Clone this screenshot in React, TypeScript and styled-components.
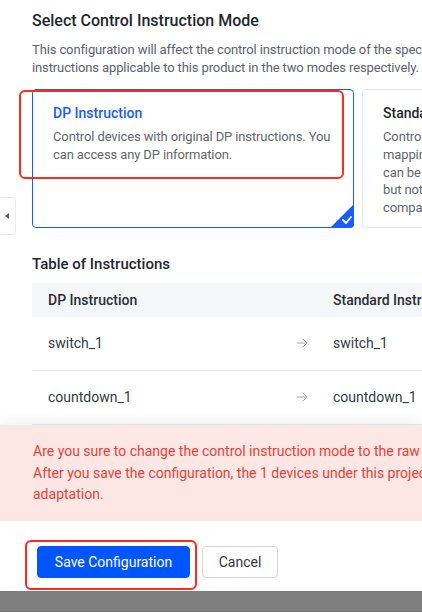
import styled, { createGlobalStyle } from "styled-components";

const Global = createGlobalStyle`
  html, body {
    margin: 0;
    padding: 0;
    background: #ffffff;
  }
  body {
    font-family: Roboto, "Liberation Sans", sans-serif;
    -webkit-font-smoothing: antialiased;
  }
`;

const Page = styled.div`
  position: relative;
  width: 422px;
  height: 612px;
  overflow: hidden;
  display: flex;
  flex-direction: column;
  background: #fff;
`;

const Scroll = styled.div`
  flex: 0 0 425px;
  overflow: hidden;
  padding: 9px 0 0 32px;
  box-sizing: border-box;
`;

const Title = styled.div`
  font-size: 16px;
  line-height: 24px;
  font-weight: 500;
  color: #23272e;
  white-space: nowrap;
`;

const Desc = styled.div`
  margin-top: 8px;
  font-size: 13px;
  line-height: 18px;
  letter-spacing: -0.12px;
  color: #5b6270;
`;

const Line = styled.span`
  display: block;
  white-space: nowrap;
`;

const CardRow = styled.div`
  margin-top: 12px;
  display: flex;
  gap: 8px;
  align-items: stretch;
`;

const Card = styled.div<{ $active?: boolean }>`
  position: relative;
  flex: 0 0 322px;
  box-sizing: border-box;
  padding: 13px 20px 10px;
  border: 1px solid ${(p) => (p.$active ? "#1a5cff" : "#e6e8eb")};
  border-radius: 4px;
`;

const CardTitle = styled.div<{ $active?: boolean }>`
  font-size: 14px;
  line-height: 20px;
  font-weight: 500;
  color: ${(p) => (p.$active ? "#1a5cff" : "#23272e")};
  white-space: nowrap;
`;

const CardText = styled.div`
  margin-top: 5px;
  font-size: 13px;
  line-height: 17.8px;
  letter-spacing: -0.12px;
  color: #62666d;
`;

const CheckCorner = styled.svg`
  position: absolute;
  right: -1px;
  bottom: -1px;
  width: 24px;
  height: 24px;
  border-bottom-right-radius: 4px;
`;

const Mark = styled.div<{ $top: number; $left: number; $w: number; $h: number }>`
  position: absolute;
  top: ${(p) => p.$top}px;
  left: ${(p) => p.$left}px;
  width: ${(p) => p.$w}px;
  height: ${(p) => p.$h}px;
  box-sizing: border-box;
  border: 2.5px solid #ff2b1f;
  border-radius: 6px;
  pointer-events: none;
`;

const CollapseTab = styled.div`
  position: absolute;
  left: -4px;
  top: 197px;
  width: 20px;
  height: 38px;
  box-sizing: border-box;
  background: #fff;
  border: 1px solid #e9ebee;
  border-radius: 0 4px 4px 0;
  display: flex;
  align-items: center;
  padding-left: 8px;
  z-index: 2;
`;

const TabArrow = styled.div`
  width: 0;
  height: 0;
  border-top: 3px solid transparent;
  border-bottom: 3px solid transparent;
  border-right: 4px solid #555b66;
`;

const SectionTitle = styled.div`
  margin-top: 25px;
  font-size: 15px;
  line-height: 22px;
  font-weight: 500;
  color: #23272e;
`;

const Table = styled.div`
  margin-top: 8px;
  width: 700px;
`;

const Row = styled.div<{ $head?: boolean }>`
  display: grid;
  grid-template-columns: 255px 30px 1fr;
  align-items: center;
  height: ${(p) => (p.$head ? "34px" : "53px")};
  background: ${(p) => (p.$head ? "#f5f6f8" : "#fff")};
  border-bottom: ${(p) => (p.$head ? "none" : "1px solid #e8eaed")};
  font-size: 14px;
  color: ${(p) => (p.$head ? "#2b2f36" : "#353a42")};
  font-weight: ${(p) => (p.$head ? 500 : 400)};
`;

const Cell = styled.div`
  padding-left: 16px;
  white-space: nowrap;
`;

const ArrowCell = styled.div`
  display: flex;
  justify-content: center;
  color: #a3a8b0;
`;

const Footer = styled.div`
  position: relative;
  flex: 0 0 auto;
  background: #fff;
  box-shadow: 0 -5px 10px rgba(0, 0, 0, 0.05);
`;

const Warning = styled.div`
  height: 96px;
  box-sizing: border-box;
  padding: 16px 0 0 33px;
  background: #fde7e4;
  color: #e5423a;
  font-size: 14px;
  line-height: 21.5px;
`;

const Actions = styled.div`
  height: 70px;
  box-sizing: border-box;
  padding: 25px 0 0 37px;
  display: flex;
  gap: 12px;
  align-items: flex-start;
`;

const ButtonWrap = styled.div`
  position: relative;
`;

const Button = styled.button<{ $primary?: boolean }>`
  height: 32px;
  box-sizing: border-box;
  padding: 0;
  border-radius: 4px;
  font-family: inherit;
  font-size: 14px;
  white-space: nowrap;
  cursor: pointer;
  border: 1px solid ${(p) => (p.$primary ? "#0055ff" : "#d4d7dc")};
  background: ${(p) => (p.$primary ? "#0055ff" : "#fff")};
  color: ${(p) => (p.$primary ? "#fff" : "#33383f")};
  width: ${(p) => (p.$primary ? "153px" : "76px")};
`;

const Dock = styled.div`
  flex: 1;
  background: #7f7f7f;
  box-shadow: inset 0 -7px 0 -6px #727272;
`;

export default function App() {
  return (
    <Page>
      <Global />
      <CollapseTab>
        <TabArrow />
      </CollapseTab>
      <Scroll>
        <Title>Select Control Instruction Mode</Title>
        <Desc>
          <Line>
            This configuration will affect the control instruction mode of the specified devices. Please check the
          </Line>
          <Line>instructions applicable to this product in the two modes respectively.</Line>
        </Desc>
        <CardRow>
          <Card $active>
            <CardTitle $active>DP Instruction</CardTitle>
            <CardText>
              <Line>Control devices with original DP instructions. You</Line>
              <Line>can access any DP information.</Line>
            </CardText>
            <CheckCorner viewBox="0 0 24 24">
              <path d="M24 0 L24 24 L0 24 Z" fill="#1a5cff" />
              <polyline
                points="13,16 16,19 21,13"
                fill="none"
                stroke="#fff"
                strokeWidth="1.8"
                strokeLinecap="round"
                strokeLinejoin="round"
              />
            </CheckCorner>
            <Mark $top={0} $left={-14} $w={325} $h={89} />
          </Card>
          <Card>
            <CardTitle>Standard Instruction</CardTitle>
            <CardText>
              <Line>Control devices with standard instructions. Standard</Line>
              <Line>mapping is required. Devices of the same category</Line>
              <Line>can be controlled with the same instruction set,</Line>
              <Line>but not all DP information can be accessed. Not</Line>
              <Line>compatible with all products.</Line>
            </CardText>
          </Card>
        </CardRow>
        <SectionTitle>Table of Instructions</SectionTitle>
        <Table>
          <Row $head>
            <Cell>DP Instruction</Cell>
            <ArrowCell />
            <Cell>Standard Instruction</Cell>
          </Row>
          {["switch_1", "countdown_1"].map((code) => (
            <Row key={code}>
              <Cell>{code}</Cell>
              <ArrowCell>
                <svg width="12" height="10" viewBox="0 0 12 10">
                  <path
                    d="M1 5 H11 M7 1 L11 5 L7 9"
                    fill="none"
                    stroke="currentColor"
                    strokeWidth="1"
                    strokeLinecap="round"
                    strokeLinejoin="round"
                  />
                </svg>
              </ArrowCell>
              <Cell>{code}</Cell>
            </Row>
          ))}
        </Table>
      </Scroll>
      <Footer>
        <Warning>
          <Line>Are you sure to change the control instruction mode to the raw DP instruction mode?</Line>
          <Line>
            After you save the configuration, the 1 devices under this project will be controlled with DP instructions, which requires panel
          </Line>
          <Line>adaptation.</Line>
        </Warning>
        <Actions>
          <ButtonWrap>
            <Button $primary>Save Configuration</Button>
            <Mark $top={-6} $left={-12} $w={172} $h={50} />
          </ButtonWrap>
          <Button>Cancel</Button>
        </Actions>
      </Footer>
      <Dock />
    </Page>
  );
}
